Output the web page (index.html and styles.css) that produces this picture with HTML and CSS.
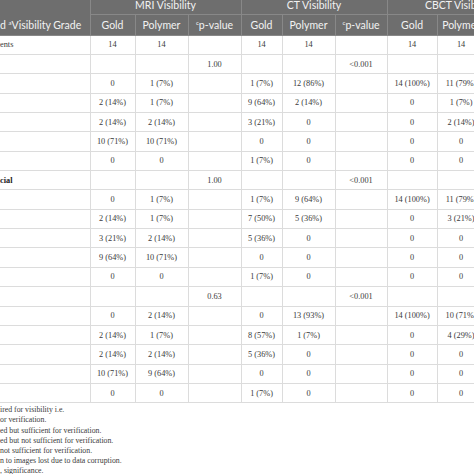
FILE: index.html
```html
<!DOCTYPE html>
<html>
<head>
<meta charset="utf-8">
<link rel="stylesheet" href="styles.css">
</head>
<body>
<div class="frame">
<table class="tbl">
  <colgroup>
    <col class="c-label"><col class="c45"><col class="c53"><col class="c53">
    <col class="c41"><col class="c53"><col class="c52"><col class="c50"><col class="c48"><col class="c46">
  </colgroup>
  <thead>
    <tr class="h1">
      <th class="lbl" rowspan="2">d <sup>a</sup>Visibility Grade</th>
      <th colspan="3">MRI Visibility</th>
      <th colspan="3">CT Visibility</th>
      <th colspan="3">CBCT Visibility</th>
    </tr>
    <tr class="h2">
      <th>Gold</th><th>Polymer</th><th><sup>c</sup>p-value</th>
      <th>Gold</th><th>Polymer</th><th><sup>c</sup>p-value</th>
      <th>Gold</th><th>Polymer</th><th><sup>c</sup>p-value</th>
    </tr>
  </thead>
  <tbody>
    <tr><td class="lbl">ents</td><td>14</td><td>14</td><td></td><td>14</td><td>14</td><td></td><td>14</td><td>14</td><td></td></tr>
    <tr><td class="lbl"></td><td></td><td></td><td>1.00</td><td></td><td></td><td>&lt;0.001</td><td></td><td></td><td></td></tr>
    <tr><td class="lbl"></td><td>0</td><td>1 (7%)</td><td></td><td>1 (7%)</td><td>12 (86%)</td><td></td><td>14 (100%)</td><td>11 (79%)</td><td></td></tr>
    <tr><td class="lbl"></td><td>2 (14%)</td><td>1 (7%)</td><td></td><td>9 (64%)</td><td>2 (14%)</td><td></td><td>0</td><td>1 (7%)</td><td></td></tr>
    <tr><td class="lbl"></td><td>2 (14%)</td><td>2 (14%)</td><td></td><td>3 (21%)</td><td>0</td><td></td><td>0</td><td>2 (14%)</td><td></td></tr>
    <tr><td class="lbl"></td><td>10 (71%)</td><td>10 (71%)</td><td></td><td>0</td><td>0</td><td></td><td>0</td><td>0</td><td></td></tr>
    <tr><td class="lbl"></td><td>0</td><td>0</td><td></td><td>1 (7%)</td><td>0</td><td></td><td>0</td><td>0</td><td></td></tr>
    <tr><td class="lbl bold">cial</td><td></td><td></td><td>1.00</td><td></td><td></td><td>&lt;0.001</td><td></td><td></td><td></td></tr>
    <tr><td class="lbl"></td><td>0</td><td>1 (7%)</td><td></td><td>1 (7%)</td><td>9 (64%)</td><td></td><td>14 (100%)</td><td>11 (79%)</td><td></td></tr>
    <tr><td class="lbl"></td><td>2 (14%)</td><td>1 (7%)</td><td></td><td>7 (50%)</td><td>5 (36%)</td><td></td><td>0</td><td>3 (21%)</td><td></td></tr>
    <tr><td class="lbl"></td><td>3 (21%)</td><td>2 (14%)</td><td></td><td>5 (36%)</td><td>0</td><td></td><td>0</td><td>0</td><td></td></tr>
    <tr><td class="lbl"></td><td>9 (64%)</td><td>10 (71%)</td><td></td><td>0</td><td>0</td><td></td><td>0</td><td>0</td><td></td></tr>
    <tr><td class="lbl"></td><td>0</td><td>0</td><td></td><td>1 (7%)</td><td>0</td><td></td><td>0</td><td>0</td><td></td></tr>
    <tr><td class="lbl"></td><td></td><td></td><td>0.63</td><td></td><td></td><td>&lt;0.001</td><td></td><td></td><td></td></tr>
    <tr><td class="lbl"></td><td>0</td><td>2 (14%)</td><td></td><td>0</td><td>13 (93%)</td><td></td><td>14 (100%)</td><td>10 (71%)</td><td></td></tr>
    <tr><td class="lbl"></td><td>2 (14%)</td><td>1 (7%)</td><td></td><td>8 (57%)</td><td>1 (7%)</td><td></td><td>0</td><td>4 (29%)</td><td></td></tr>
    <tr><td class="lbl"></td><td>2 (14%)</td><td>2 (14%)</td><td></td><td>5 (36%)</td><td>0</td><td></td><td>0</td><td>0</td><td></td></tr>
    <tr><td class="lbl"></td><td>10 (71%)</td><td>9 (64%)</td><td></td><td>0</td><td>0</td><td></td><td>0</td><td>0</td><td></td></tr>
    <tr><td class="lbl"></td><td>0</td><td>0</td><td></td><td>1 (7%)</td><td>0</td><td></td><td>0</td><td>0</td><td></td></tr>
  </tbody>
</table>
<div class="notes">
  <p>ired for visibility i.e.</p>
  <p>or verification.</p>
  <p>ed but sufficient for verification.</p>
  <p>ed but not sufficient for verification.</p>
  <p>not sufficient for verification.</p>
  <p>n to images lost due to data corruption.</p>
  <p>, significance.</p>
</div>
</div>
</body>
</html>
```
FILE: styles.css
```css
html, body {
  margin: 0;
  padding: 0;
  background: #ffffff;
}
.frame {
  width: 474px;
  height: 474px;
  overflow: hidden;
}
.tbl {
  width: 531px;
  table-layout: fixed;
  border-collapse: collapse;
  font-family: "Liberation Serif", serif;
  font-size: 8.3px;
  color: #3a3a3a;
}
.c-label { width: 90px; }
.c45 { width: 45px; }
.c53 { width: 53px; }
.c52 { width: 52px; }
.c50 { width: 50px; }
.c48 { width: 48px; }
.c46 { width: 46px; }
.c41 { width: 41px; }
.tbl th {
  background: #6e6e6e;
  color: #f2f2f2;
  font-family: Lato, "Open Sans", sans-serif;
  font-weight: normal;
  font-size: 10.5px;
  text-align: center;
  padding: 0;
  border: 1px solid #888888;
  border-top: none;
  white-space: nowrap;
}
.tbl th sup {
  font-size: 6px;
  vertical-align: 4px;
}
.tbl tr.h1 { height: 14px; }
.tbl tr.h1 th { vertical-align: top; line-height: 11px; }
.tbl tr.h2 { height: 21px; }
.tbl tr.h1 th.lbl {
  text-align: left;
  vertical-align: bottom;
  line-height: 14px;
  padding-bottom: 3px;
  border-left: none;
}
.tbl td {
  height: 18.37px;
  padding: 0;
  text-align: center;
  border: 1px solid #dcdcdc;
  white-space: nowrap;
}
.tbl td.lbl {
  text-align: left;
  border-left: none;
}
.tbl td.bold {
  font-weight: bold;
  color: #222;
}
.notes {
  margin-top: 2px;
  font-family: "Liberation Serif", serif;
  font-size: 7.8px;
  color: #3a3a3a;
}
.notes p {
  margin: 0;
  line-height: 10.1px;
  white-space: nowrap;
}
```
